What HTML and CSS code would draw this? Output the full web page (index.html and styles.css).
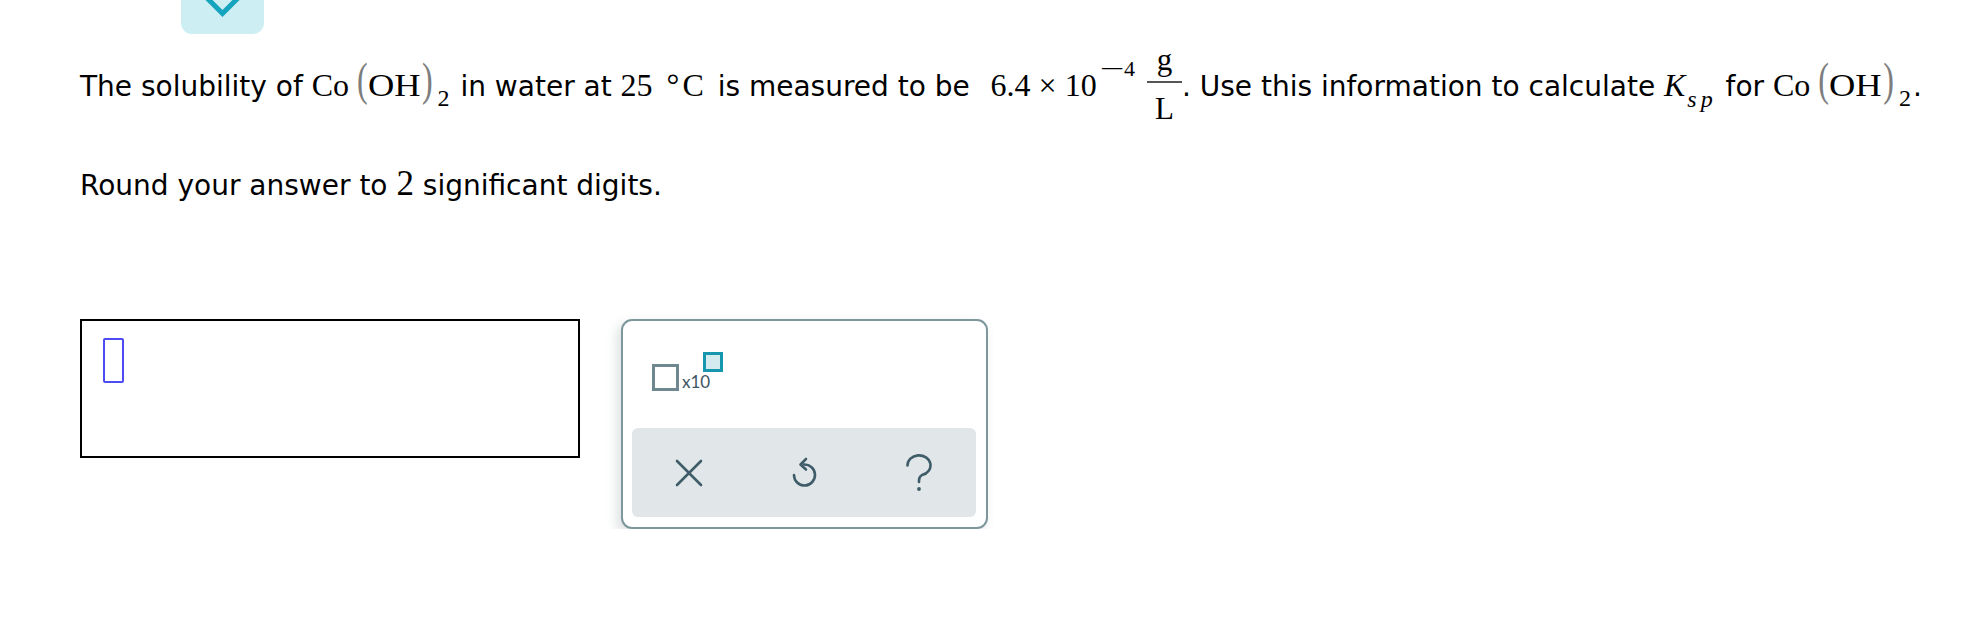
FILE: index.html
```html
<!DOCTYPE html>
<html lang="en">
<head>
<meta charset="utf-8">
<title>Question</title>
<link rel="stylesheet" href="styles.css">
</head>
<body>
<div class="page">
  <div class="tab">
    <svg class="chev" width="83" height="34" viewBox="0 0 83 34"><path d="M24 -4 L41.5 13.5 L59 -4" fill="none" stroke="#14a4be" stroke-width="5"/></svg>
  </div>

  <p class="q">The solubility of <span class="m">Co<span class="par l">(</span><span class="oh">OH</span><span class="par r">)</span><span class="sub">2</span></span> in water at <span class="m temp">25<span class="deg">°</span>C</span> is measured to be <span class="m num-m">6.4 × 10<span class="sup"><span class="minus">−</span>4</span></span> <span class="frac"><span class="num">g</span><span class="bar"></span><span class="den">L</span></span>. Use this information to calculate <span class="m"><i>K</i><span class="sub it">sp</span></span> for <span class="m">Co<span class="par l">(</span><span class="oh">OH</span><span class="par r">)</span><span class="sub">2</span></span>.</p>

  <p class="q2">Round your answer to <span class="m big">2</span> significant digits.</p>

  <div class="answer-row">
    <div class="answer-box"><span class="cursor"></span></div>
    <div class="panel">
      <div class="tools">
        <div class="sci">
          <span class="sq"></span>
          <span class="x10">x10</span>
          <span class="exp-sq"></span>
        </div>
      </div>
      <div class="actions">
        <div class="act">
          <svg width="28" height="28" viewBox="0 0 28 28"><path d="M2 2 L26 26 M26 2 L2 26" stroke="#3e5d69" stroke-width="2.6" stroke-linecap="round" fill="none"/></svg>
        </div>
        <div class="act">
          <svg width="28" height="32" viewBox="0 0 28 32"><path d="M14 7.5 A10.5 10.5 0 1 1 4 18" stroke="#3e5d69" stroke-width="2.6" stroke-linecap="round" fill="none"/><path d="M16 2 L10.5 7.5 L16 12.5" stroke="#3e5d69" stroke-width="2.6" stroke-linecap="round" stroke-linejoin="round" fill="none"/></svg>
        </div>
        <div class="act">
          <svg width="28" height="38" viewBox="0 0 28 38"><path d="M2.5 11.5 A11.5 10 0 1 1 17 21 C14.5 22.5 14 24 14 26.5 V28" stroke="#3e5d69" stroke-width="2.6" stroke-linecap="round" fill="none"/><circle cx="14" cy="35" r="1.9" fill="#3e5d69"/></svg>
        </div>
      </div>
    </div>
  </div>
</div>
</body>
</html>
```

FILE: styles.css
```css
* { box-sizing: border-box; }

body {
  margin: 0;
  background: #ffffff;
  color: #000000;
  font-family: "DejaVu Sans", Verdana, sans-serif;
}

.page {
  padding-left: 80px;
}

.tab {
  margin-left: 101px;
  width: 83px;
  height: 34px;
  background: #cdeef3;
  border-radius: 0 0 11px 11px;
  overflow: hidden;
}

.chev { display: block; }

.q {
  margin: 10px 0 0 0;
  font-size: 28px;
  line-height: 40px;
  white-space: nowrap;
}

.q2 {
  margin: 42px 0 0 0;
  font-size: 28px;
  line-height: 40px;
  white-space: nowrap;
}

.m {
  font-family: "Liberation Serif", "Times New Roman", serif;
  font-size: 32px;
  line-height: 1;
}

.m i { font-style: italic; }

.m.big { font-size: 35px; }

.m.num-m { margin-left: 12px; }

.m.temp { margin-right: 5px; }

.oh {
  display: inline-block;
  transform: scaleX(1.14);
  transform-origin: 0 50%;
  margin-right: 7px;
}

.par {
  display: inline-block;
  color: #7d7d7d;
  transform: translateY(-5.5px) scaleY(1.45);
}

.par.l { margin-left: 8px; }
.par.r { margin-left: 1px; }

.deg {
  margin-left: 14px;
  letter-spacing: 3px;
}

.sub {
  font-size: 24px;
  line-height: 1;
  vertical-align: -10px;
  margin: 0 2px 0 5px;
}

.sub.it {
  font-style: italic;
  vertical-align: -11px;
  margin: 0 0 0 2px;
  letter-spacing: 4px;
}

.sup {
  font-size: 22px;
  line-height: 1;
  vertical-align: 20px;
}

.minus {
  display: inline-block;
  transform: scaleX(2);
  margin: 0 6px 0 9px;
}

.frac {
  display: inline-flex;
  flex-direction: column;
  align-items: center;
  vertical-align: 26px;
  margin-left: 3px;
  font-family: "Liberation Serif", "Times New Roman", serif;
  font-size: 31px;
  line-height: 31px;
}

.num { padding-bottom: 6px; }

.bar {
  width: 35px;
  height: 2px;
  background: #555555;
}

.den { margin-top: 10px; }

.answer-row {
  margin-top: 113px;
  display: flex;
  align-items: flex-start;
}

.answer-box {
  width: 500px;
  height: 139px;
  border: 2px solid #000000;
  padding: 17px 0 0 21px;
}

.cursor {
  display: block;
  width: 21px;
  height: 45px;
  border: 2px solid #4c4cf2;
  border-radius: 2px;
}

.panel {
  margin-left: 41px;
  width: 367px;
  height: 210px;
  border: 2px solid #7e979d;
  border-radius: 11px;
  background: #ffffff;
  box-shadow: -4px 5px 12px rgba(40, 60, 70, 0.16);
  padding: 0 10px 10px 9px;
  display: flex;
  flex-direction: column;
}

.tools {
  height: 107px;
  padding: 31px 0 0 20px;
}

.sci {
  display: inline-flex;
  align-items: flex-start;
}

.sq {
  margin-top: 12px;
  width: 27px;
  height: 27px;
  border: 3px solid #6f878f;
}

.x10 {
  align-self: flex-end;
  margin: 0 0 1px 3px;
  font-family: Lato, "Open Sans", sans-serif;
  font-size: 17px;
  line-height: 16px;
  color: #3c5561;
}

.exp-sq {
  margin-left: -7px;
  width: 20px;
  height: 20px;
  border: 3px solid #1797ad;
  background: #d3ebef;
}

.actions {
  flex: 1;
  display: flex;
  background: #e1e6e9;
  border-radius: 6px;
}

.act {
  flex: 1;
  display: flex;
  align-items: center;
  justify-content: center;
}

.act svg { display: block; }
```
